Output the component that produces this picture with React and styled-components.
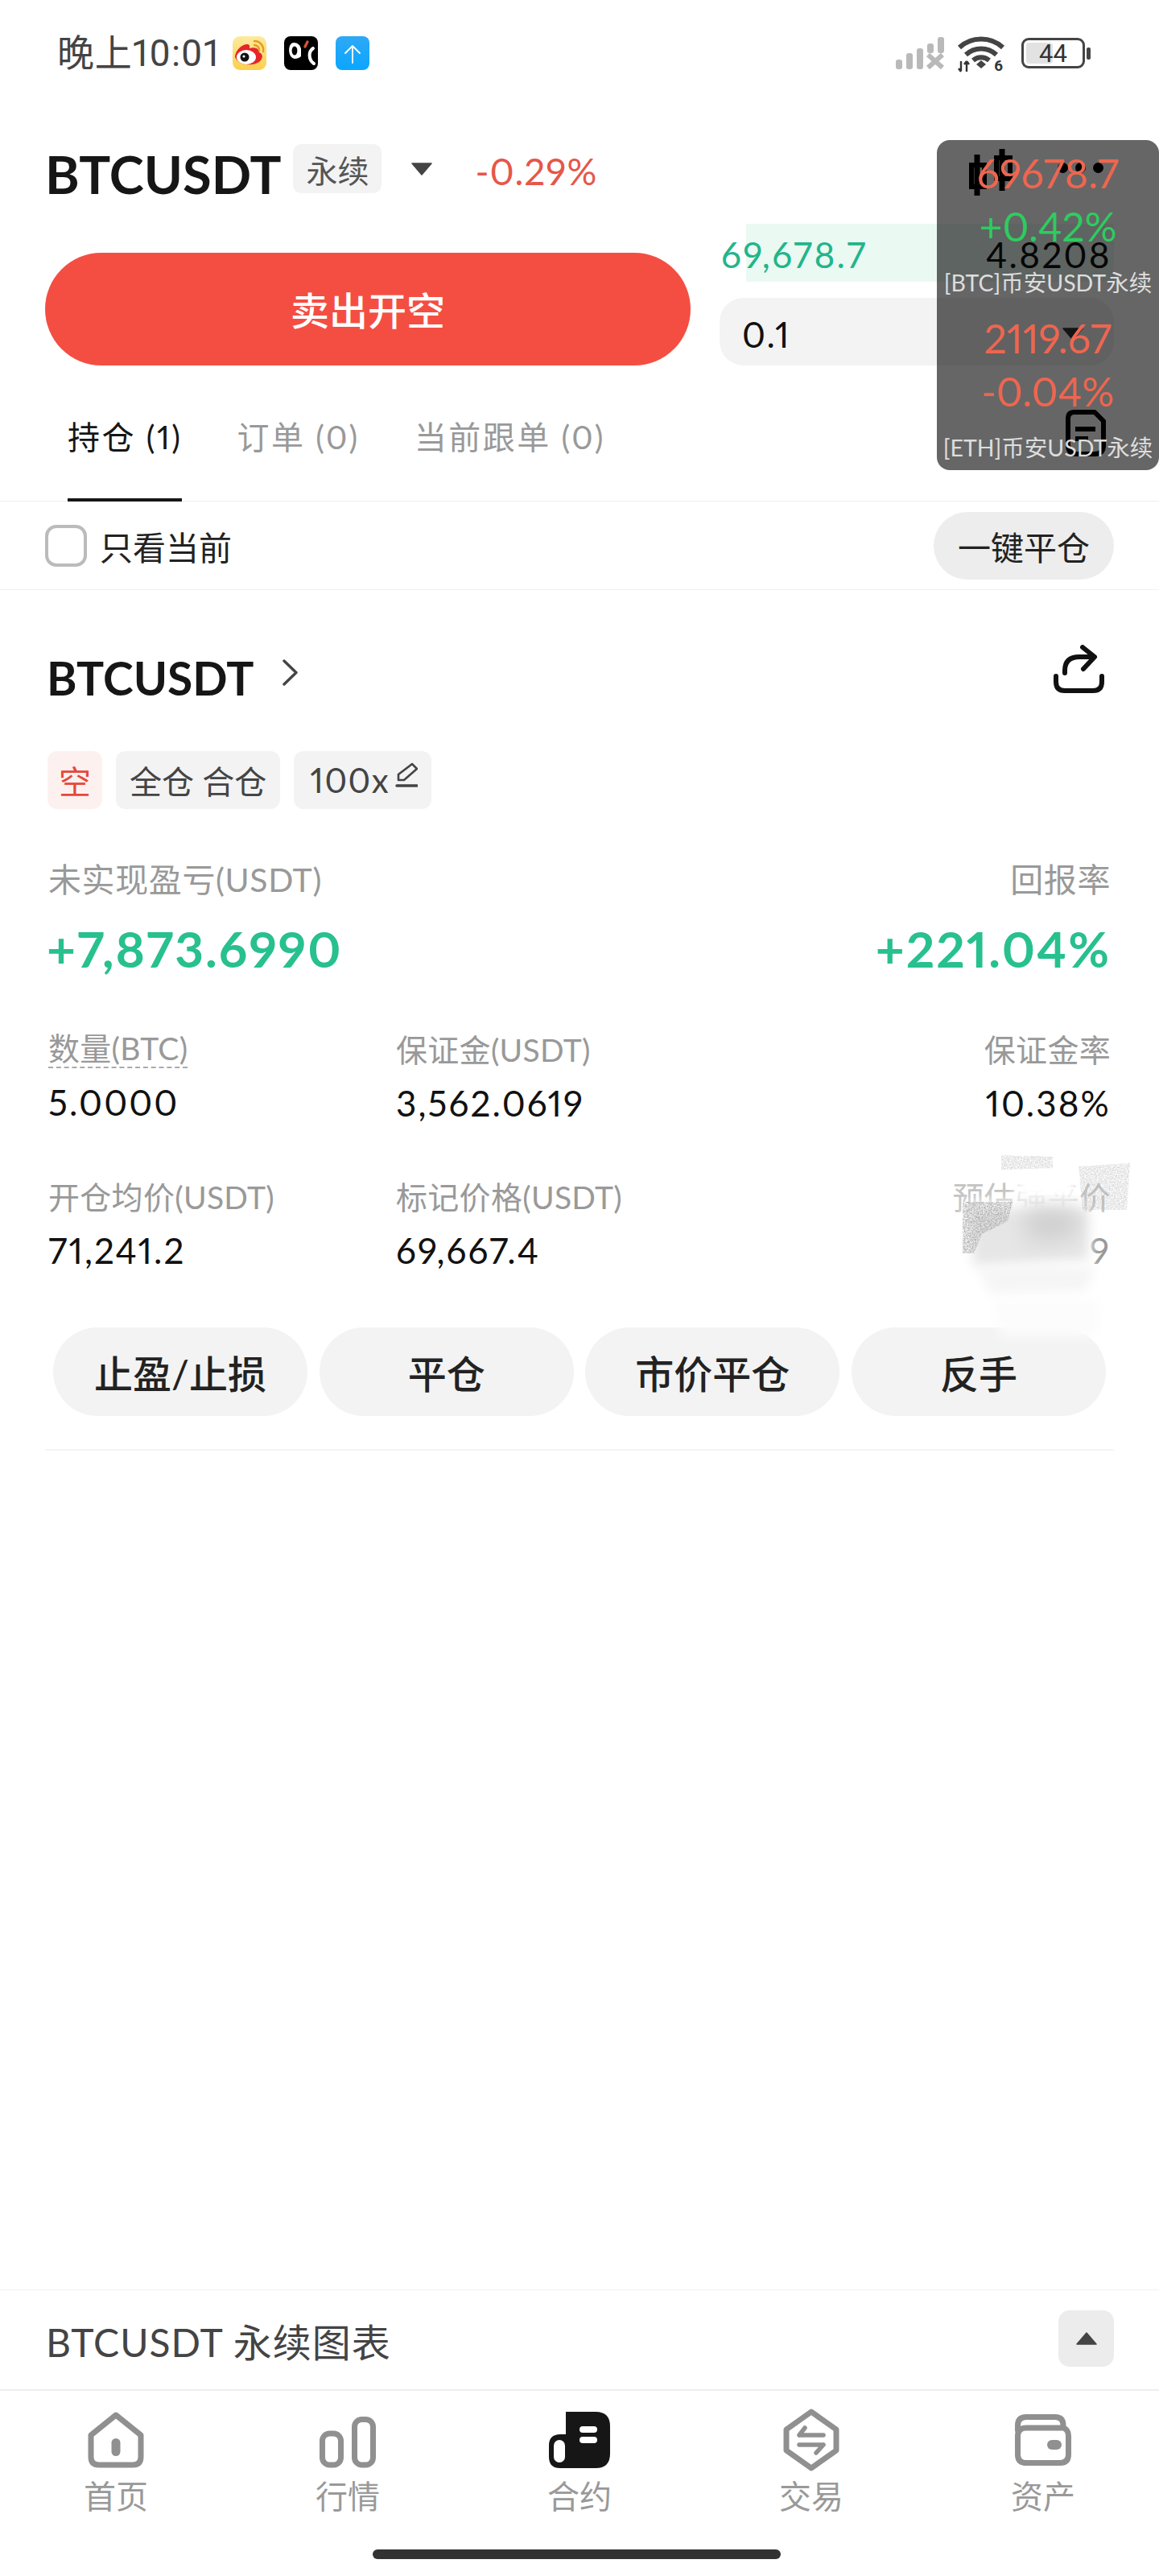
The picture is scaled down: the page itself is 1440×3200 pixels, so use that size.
import React from 'react'
import styled, { createGlobalStyle } from 'styled-components';

const GlobalStyle = createGlobalStyle`
html, body {
    margin: 0;
    padding: 0;
    background: #fff;
}
* {
    box-sizing: border-box;
}
body {
    font-family: Lato, "Noto Sans CJK SC", sans-serif;
    font-variant-numeric: proportional-nums;
    color: #111;
}
`

const Page = styled.div`
position: relative;
width: 1440px;
height: 3200px;
display: flex;
flex-direction: column;
background: #fff;
overflow: hidden;
`

const StatusBar = styled.div`
height: 132px;
padding: 0 92px 0 71px;
display: flex;
align-items: center;
justify-content: space-between;
`

const StatusLeft = styled.div`
display: flex;
align-items: center;
`

const StatusTime = styled.span`
font-family: Roboto, "Noto Sans CJK SC", sans-serif;
font-size: 46px;
line-height: 52px;
letter-spacing: 0.8px;
color: #444;
margin-right: 16px;
`

const AppIcon = styled.svg`
width: 42px;
height: 42px;
margin-right: 22px;
display: block;
`

const StatusRight = styled.div`
display: flex;
align-items: center;
gap: 16px;
`

const Battery = styled.div`
position: relative;
width: 79px;
height: 38px;
border: 3px solid #444;
border-radius: 9px;
padding: 3px;
margin-left: 4px;
font-family: Roboto, sans-serif;
font-size: 31px;
color: #333;
display: flex;
align-items: center;
justify-content: center;
&::before {
    content: "";
    position: absolute;
    left: 3px;
    top: 3px;
    bottom: 3px;
    width: 33px;
    background: #e2e2e2;
    border-radius: 4px;
}
&::after {
    content: "";
    position: absolute;
    right: -10px;
    top: 9px;
    width: 5px;
    height: 15px;
    background: #444;
    border-radius: 2px;
}
`

const BatteryNum = styled.span`
position: relative;
`

const TopRow = styled.div`
height: 146px;
padding: 47px 69px 0 56px;
display: flex;
align-items: flex-start;
justify-content: space-between;
`

const TitleGroup = styled.div`
display: flex;
align-items: center;
height: 61px;
`

const Title = styled.h1`
margin: 0;
font-size: 65px;
line-height: 76px;
font-weight: 700;
color: #161616;
position: relative;
top: 6px;
`

const KindTag = styled.span`
width: 110px;
height: 61px;
margin-left: 15px;
background: #f3f3f3;
border-radius: 10px;
display: flex;
align-items: center;
justify-content: center;
font-size: 39px;
color: #555;
`

const Caret = styled.svg`
width: 26px;
height: 16px;
display: block;
margin-left: ${p => p.$left || 0}px;
`

const Change = styled.span`
margin: 6px 0 0 53px;
font-size: 46px;
letter-spacing: 1px;
color: #e5574a;
`

const ToolIcons = styled.div`
display: flex;
align-items: center;
gap: 56px;
margin-top: 6px;
`

const Dots = styled.div`
display: flex;
gap: 9px;
margin-top: -12px;
`

const Dot = styled.span`
width: 13px;
height: 13px;
border-radius: 50%;
background: #000;
`

const Trade = styled.div`
height: 176px;
padding: 0 56px;
display: flex;
gap: 36px;
`

const SellButton = styled.div`
width: 802px;
height: 140px;
margin-top: 36px;
padding-bottom: 2px;
border-radius: 70px;
background: #f44e43;
color: #fff;
font-size: 48px;
font-weight: 500;
display: flex;
align-items: center;
justify-content: center;
`

const TradeSide = styled.div`
width: 490px;
display: flex;
flex-direction: column;
gap: 20px;
`

const DepthRow = styled.div`
position: relative;
height: 72px;
display: flex;
align-items: center;
justify-content: space-between;
padding: 4px 3px 0 2px;
font-size: 44px;
letter-spacing: 2.3px;
`

const DepthBar = styled.div`
position: absolute;
left: 33px;
right: 0;
top: 0;
bottom: 0;
background: #ebf9f3;
`

const DepthValue = styled.span`
position: relative;
color: ${p => p.$color};
`

const AmountInput = styled.div`
height: 84px;
border-radius: 30px;
background: #f3f3f3;
padding: 6px 38px 0 28px;
display: flex;
align-items: center;
justify-content: space-between;
font-size: 44px;
letter-spacing: 2px;
color: #111;
`

const Tabs = styled.div`
height: 169px;
padding: 64px 10px 0 84px;
display: flex;
align-items: flex-end;
border-bottom: 1px solid #f0f0f0;
`

const Tab = styled.div`
height: 104px;
margin-right: 68px;
padding-bottom: 52px;
margin-bottom: -1px;
font-size: 40px;
line-height: 48px;
letter-spacing: 2.5px;
white-space: nowrap;
color: ${p => (p.$active ? '#161616' : '#999')};
border-bottom: 4px solid ${p => (p.$active ? '#161616' : 'transparent')};
`

const TabDoc = styled.svg`
width: 50px;
height: 58px;
margin-left: auto;
margin-right: 56px;
margin-bottom: 55px;
display: block;
`

const FilterRow = styled.div`
height: 110px;
padding: 0 56px;
display: flex;
align-items: center;
justify-content: space-between;
border-bottom: 1px solid #f0f0f0;
`

const OnlyCurrent = styled.label`
display: flex;
align-items: center;
gap: 16px;
font-size: 41px;
color: #222;
`

const Check = styled.span`
width: 52px;
height: 52px;
border: 4px solid #bbb;
border-radius: 14px;
`

const CloseAll = styled.div`
width: 224px;
height: 84px;
border-radius: 42px;
background: #ededed;
color: #222;
font-size: 41px;
display: flex;
align-items: center;
justify-content: center;
`

const Card = styled.div`
padding: 66px 60px 0;
display: flex;
flex-direction: column;
`

const CardHead = styled.div`
height: 88px;
display: flex;
align-items: center;
`

const CardTitle = styled.span`
margin: -2px 0 0 -2px;
font-size: 57px;
font-weight: 700;
color: #161616;
`

const Chevron = styled.svg`
width: 19px;
height: 33px;
margin: -16px 0 0 36px;
display: block;
`

const ShareIcon = styled.svg`
width: 63px;
height: 60px;
margin: -24px 8px 0 auto;
display: block;
`

const TagRow = styled.div`
margin-top: 46px;
margin-left: -1px;
display: flex;
gap: 17px;
`

const Tag = styled.span`
height: 72px;
padding: 0 ${p => (p.$side ? 14 : 17)}px;
border-radius: 12px;
background: ${p => (p.$side ? '#fdf1f0' : '#f3f3f3')};
color: ${p => (p.$side ? '#e5483b' : '#444')};
font-size: 40px;
display: flex;
align-items: center;
gap: 7px;
`

const LeverNum = styled.span`
margin-left: 3px;
font-size: 42px;
letter-spacing: 1.5px;
`

const PencilIcon = styled.svg`
width: 28px;
height: 31px;
margin-top: -14px;
display: block;
`

const PnlRow = styled.div`
margin-top: 64px;
display: flex;
justify-content: space-between;
`

const PnlCol = styled.div`
display: flex;
flex-direction: column;
align-items: ${p => (p.$right ? 'flex-end' : 'flex-start')};
`

const PnlLabel = styled.span`
font-size: 41px;
line-height: 48px;
letter-spacing: 0.6px;
color: #999;
white-space: nowrap;
`

const Label = styled.span`
font-size: 39px;
line-height: 48px;
letter-spacing: 0.3px;
color: #999;
white-space: nowrap;
${p => p.$dashed && 'border-bottom: 2px dashed #aaa; line-height: 45px; height: 47px; display: inline-block;'}
`

const PnlValue = styled.span`
margin: 29px 0 0 -2px;
font-size: 62px;
line-height: 64px;
font-weight: 700;
letter-spacing: 2px;
color: #27c08e;
`

const StatGrid = styled.div`
margin-top: 70px;
display: grid;
grid-template-columns: 432px 1fr auto;
row-gap: 69px;
`

const Stat = styled.div`
display: flex;
flex-direction: column;
align-items: ${p => (p.$right ? 'flex-end' : 'flex-start')};
`

const Value = styled.span`
margin-top: 18px;
font-size: 44px;
line-height: 48px;
letter-spacing: 2.1px;
color: ${p => p.$color || '#111'};
`

const FadedLabel = styled(Label)`
color: #c4c4c4;
`

const Actions = styled.div`
margin: 72px 6px 0;
display: grid;
grid-template-columns: repeat(4, 316px);
justify-content: space-between;
`

const ActionButton = styled.div`
height: 110px;
border-radius: 55px;
background: #f3f3f3;
color: #222;
font-size: 48px;
font-weight: 500;
display: flex;
align-items: center;
justify-content: center;
`

const CardDivider = styled.div`
height: 2px;
margin: 41px -4px 0;
background: #f4f4f4;
`

const Spacer = styled.div`
flex: 1;
`

const ChartRow = styled.div`
height: 126px;
padding: 0 56px 0 57px;
display: flex;
align-items: center;
justify-content: space-between;
border-top: 1px solid #f0f0f0;
border-bottom: 2px solid #eee;
`

const ChartTitle = styled.span`
font-size: 48px;
letter-spacing: 1px;
color: #444;
`

const ChartToggle = styled.div`
width: 69px;
height: 70px;
margin-top: -4px;
border-radius: 14px;
background: #ececec;
display: flex;
align-items: center;
justify-content: center;
`

const NavBar = styled.div`
height: 230px;
display: grid;
grid-template-columns: repeat(5, 288px);
`

const NavItem = styled.div`
height: 156px;
display: flex;
flex-direction: column;
align-items: center;
justify-content: flex-end;
gap: 10px;
font-size: 40px;
line-height: 50px;
color: #999;
`

const NavIcon = styled.svg`
height: ${p => p.$h}px;
width: ${p => p.$w}px;
display: block;
margin-bottom: ${p => p.$mb || 0}px;
`

const HomeIndicator = styled.div`
position: absolute;
left: 463px;
top: 3167px;
width: 507px;
height: 12px;
border-radius: 6px;
background: #333;
`

// floating ticker window, sits over the header
const Ticker = styled.div`
position: absolute;
left: 1164px;
top: 174px;
width: 276px;
height: 410px;
border-radius: 16px;
background: rgba(0, 0, 0, 0.6);
display: flex;
flex-direction: column;
align-items: center;
`

const TickerBlock = styled.div`
height: 205px;
padding-top: 11px;
display: flex;
flex-direction: column;
align-items: center;
`

const TickerNum = styled.span`
font-size: 50px;
line-height: 60px;
height: 66px;
color: ${p => p.$color};
white-space: nowrap;
`

const TickerName = styled.span`
font-size: 28.5px;
line-height: 40px;
margin-top: 14px;
color: #ddd;
white-space: nowrap;
`

const Smudge = styled.svg`
position: absolute;
left: 1160px;
top: 1425px;
width: 250px;
height: 260px;
display: block;
`

const WeiboIcon = () => (
    <AppIcon viewBox="0 0 42 42">
        <defs>
            <linearGradient id="wb" x1="0" y1="0" x2="0" y2="1">
                <stop offset="0" stopColor="#fdeaa0" />
                <stop offset="1" stopColor="#fbd04a" />
            </linearGradient>
        </defs>
        <rect width="42" height="42" rx="9" fill="url(#wb)" />
        <path d="M3 26 C3 17 13 9 19 10 C22 11 21 14 21 15 C27 13 33 15 33 20 C38 22 38 27 34 31 C28 37 8 38 3 26 Z" fill="#e6252a" />
        <ellipse cx="17" cy="26" rx="12" ry="9" fill="#fff" />
        <circle cx="15" cy="26" r="5.5" fill="#111" />
        <circle cx="14" cy="25" r="1.6" fill="#fff" />
        <path d="M27 6 A11 11 0 0 1 38 19 M27 11 A6 6 0 0 1 33 18" fill="none" stroke="#e99a22" strokeWidth="2.4" strokeLinecap="round" />
    </AppIcon>
)

const PodIcon = () => (
    <AppIcon viewBox="0 0 42 42">
        <rect width="42" height="42" rx="8" fill="#000" />
        <path d="M12 8 C4 8 4 27 13 28 C16 28 19 27 21 25 L21 16 C20 11 17 8 12 8 Z" fill="#fff" />
        <ellipse cx="13" cy="18" rx="3.4" ry="5.5" fill="#000" />
        <path d="M36 15 C30 19 30 29 37 34" fill="none" stroke="#fff" strokeWidth="4" strokeLinecap="round" />
        <path d="M29 7 L26 13" stroke="#d5532f" strokeWidth="3.4" strokeLinecap="round" />
    </AppIcon>
)

const UploadIcon = () => (
    <AppIcon viewBox="0 0 42 42">
        <defs>
            <linearGradient id="up" x1="0" y1="0" x2="0" y2="1">
                <stop offset="0" stopColor="#2fa8f5" />
                <stop offset="1" stopColor="#0aa6ff" />
            </linearGradient>
        </defs>
        <rect width="42" height="42" rx="8" fill="url(#up)" />
        <path d="M21 33 V12 M12 21 L21 12 L30 21" fill="none" stroke="#fff" strokeWidth="1.8" strokeLinecap="round" strokeLinejoin="round" />
    </AppIcon>
)

const SignalIcon = () => (
    <svg width="60" height="40" viewBox="0 0 60 40">
        <g fill="#b9b9b9">
            <rect x="0" y="28" width="8" height="12" rx="3" />
            <rect x="13" y="20" width="8" height="20" rx="3" />
            <rect x="26" y="14" width="8" height="26" rx="3" />
            <rect x="39" y="8" width="8" height="12" rx="3" />
            <rect x="52" y="0" width="8" height="20" rx="3" />
        </g>
        <path d="M40 22 L58 38 M58 22 L40 38" stroke="#b9b9b9" strokeWidth="6" />
    </svg>
)

const WifiIcon = () => (
    <svg width="60" height="52" viewBox="0 -4 60 52">
        <g fill="none" stroke="#444" strokeWidth="6">
            <path d="M3 15 C18 1 42 1 57 15" />
            <path d="M11 24 C22 14 38 14 49 24" />
            <path d="M20 31 C26 26 34 26 40 31" />
        </g>
        <path d="M24 36 L30 31 L36 36 L30 41 Z" fill="#444" />
        <path d="M5 32 V44 M2 41 L5 45 M12 45 V33 M9 36 L12 32 M15 36 L12 32" fill="none" stroke="#333" strokeWidth="2.4" />
        <text x="46" y="44" fontFamily="Roboto" fontWeight="700" fontSize="19" fill="#333">6</text>
    </svg>
)

const KlineIcon = () => (
    <svg width="54" height="58" viewBox="0 0 54 58" style={{ display: 'block' }}>
        <g fill="none" stroke="#000" strokeWidth="6">
            <path d="M10 7 V58 M41 0 V52" strokeWidth="7" />
            <rect x="3" y="20" width="16" height="27" />
            <rect x="34" y="11" width="17" height="26" />
        </g>
    </svg>
)

const Triangle = ({ left, color = '#444', up }) => (
    <Caret $left={left} viewBox="0 0 26 16">
        <path d={up ? 'M13 1 L25 15 H1 Z' : 'M1 1 H25 L13 15 Z'} fill={color} stroke={color} strokeWidth="1.5" strokeLinejoin="round" />
    </Caret>
)

const navStroke = { fill: 'none', stroke: '#909090', strokeWidth: 7, strokeLinejoin: 'round', strokeLinecap: 'round' }

const HomeNav = () => (
    <NavIcon $w={70} $h={70} viewBox="0 0 70 70">
        <path d="M35 4 L66 29 V56 Q66 66 56 66 H14 Q4 66 4 56 V29 Z" {...navStroke} />
        <rect x="29.5" y="33" width="11" height="22" rx="5.5" fill="#909090" />
    </NavIcon>
)

const MarketNav = () => (
    <NavIcon $w={70} $h={64} viewBox="0 0 70 64">
        <rect x="3.5" y="21" width="23" height="39" rx="9" {...navStroke} />
        <rect x="43.5" y="3.5" width="23" height="56.5" rx="9" {...navStroke} />
    </NavIcon>
)

const ContractNav = () => (
    <NavIcon $w={76} $h={70} viewBox="0 0 76 70">
        <path d="M21 0 H58 Q76 0 76 18 V52 Q76 70 58 70 H14 Q0 70 0 56 V42 Q0 28 14 28 H21 Z" fill="#161616" />
        <rect x="6" y="35" width="14" height="28" rx="7" fill="#fff" />
        <rect x="38" y="18" width="22" height="8" rx="4" fill="#fff" />
        <rect x="38" y="31" width="22" height="8" rx="4" fill="#fff" />
    </NavIcon>
)

const TradeNav = () => (
    <NavIcon $w={70} $h={78} $mb={-4} viewBox="0 0 70 78">
        <path d="M35 4 L66 26 V52 L35 74 L4 52 V26 Z" {...navStroke} />
        <path d="M20 33 H50 M20 33 L27 24 M20 45 H50 M50 45 L41 55" {...navStroke} strokeWidth="5.5" />
    </NavIcon>
)

const WalletNav = () => (
    <NavIcon $w={70} $h={64} $mb={3} viewBox="0 0 70 64">
        <path d="M3.5 20 V14 Q3.5 3.5 14 3.5 H50 Q60 3.5 60 14 V17 H14 Q3.5 17 3.5 27 V50 Q3.5 60.5 14 60.5 H56 Q66.5 60.5 66.5 50 V27 Q66.5 19 60 17" {...navStroke} />
        <rect x="40" y="32" width="18" height="12" rx="6" fill="#909090" />
    </NavIcon>
)

const NAV_ITEMS = [
    { label: '首页', icon: <HomeNav /> },
    { label: '行情', icon: <MarketNav /> },
    { label: '合约', icon: <ContractNav /> },
    { label: '交易', icon: <TradeNav /> },
    { label: '资产', icon: <WalletNav /> },
];

const ACTIONS = ['止盈/止损', '平仓', '市价平仓', '反手'];

const App = () => {
    return (
        <Page>
            <GlobalStyle />
            <StatusBar>
                <StatusLeft>
                    <StatusTime>晚上10:01</StatusTime>
                    <WeiboIcon />
                    <PodIcon />
                    <UploadIcon />
                </StatusLeft>
                <StatusRight>
                    <SignalIcon />
                    <WifiIcon />
                    <Battery><BatteryNum>44</BatteryNum></Battery>
                </StatusRight>
            </StatusBar>

            <TopRow>
                <TitleGroup>
                    <Title>BTCUSDT</Title>
                    <KindTag>永续</KindTag>
                    <Triangle left={37} />
                    <Change>-0.29%</Change>
                </TitleGroup>
                <ToolIcons>
                    <KlineIcon />
                    <Dots><Dot /><Dot /><Dot /></Dots>
                </ToolIcons>
            </TopRow>

            <Trade>
                <SellButton>卖出开空</SellButton>
                <TradeSide>
                    <DepthRow>
                        <DepthBar />
                        <DepthValue $color="#22b58a">69,678.7</DepthValue>
                        <DepthValue $color="#111">4.8208</DepthValue>
                    </DepthRow>
                    <AmountInput>
                        0.1
                        <Triangle color="#333" />
                    </AmountInput>
                </TradeSide>
            </Trade>

            <Tabs>
                <Tab $active>持仓 (1)</Tab>
                <Tab>订单 (0)</Tab>
                <Tab>当前跟单 (0)</Tab>
                <TabDoc viewBox="0 0 50 58">
                    <path d="M11 3 H36 L47 14 V44 Q47 55 36 55 H14 Q3 55 3 44 V11 Q3 3 11 3 Z" fill="none" stroke="#000" strokeWidth="6" strokeLinejoin="round" />
                    <path d="M12 24 H37 M12 36 H28" stroke="#000" strokeWidth="6" />
                </TabDoc>
            </Tabs>

            <FilterRow>
                <OnlyCurrent><Check />只看当前</OnlyCurrent>
                <CloseAll>一键平仓</CloseAll>
            </FilterRow>

            <Card>
                <CardHead>
                    <CardTitle>BTCUSDT</CardTitle>
                    <Chevron viewBox="0 0 19 33">
                        <path d="M2 2 L17 16.5 L2 31" fill="none" stroke="#444" strokeWidth="3.4" strokeLinecap="round" strokeLinejoin="round" />
                    </Chevron>
                    <ShareIcon viewBox="0 0 63 60">
                        <g fill="none" stroke="#111" strokeWidth="6" strokeLinecap="round" strokeLinejoin="round">
                            <path d="M3 39 V46 Q3 57 14 57 H49 Q60 57 60 46 V39" />
                            <path d="M14 35 V32 Q14 15 32 15 H50" />
                            <path d="M36 3 L51 15 L37 30" />
                        </g>
                    </ShareIcon>
                </CardHead>

                <TagRow>
                    <Tag $side>空</Tag>
                    <Tag>全仓 合仓</Tag>
                    <Tag>
                        <LeverNum>100x</LeverNum>
                        <PencilIcon viewBox="0 0 28 31">
                            <path d="M21 2 L27 8 L11 22 H4 V15 Z" fill="none" stroke="#444" strokeWidth="2.6" strokeLinejoin="round" />
                            <path d="M2 29 H27" stroke="#444" strokeWidth="3.4" strokeLinecap="round" />
                        </PencilIcon>
                    </Tag>
                </TagRow>

                <PnlRow>
                    <PnlCol>
                        <PnlLabel>未实现盈亏(USDT)</PnlLabel>
                        <PnlValue>+7,873.6990</PnlValue>
                    </PnlCol>
                    <PnlCol $right>
                        <PnlLabel>回报率</PnlLabel>
                        <PnlValue>+221.04%</PnlValue>
                    </PnlCol>
                </PnlRow>

                <StatGrid>
                    <Stat>
                        <Label $dashed>数量(BTC)</Label>
                        <Value>5.0000</Value>
                    </Stat>
                    <Stat>
                        <Label>保证金(USDT)</Label>
                        <Value>3,562.0619</Value>
                    </Stat>
                    <Stat $right>
                        <Label>保证金率</Label>
                        <Value>10.38%</Value>
                    </Stat>
                    <Stat>
                        <Label>开仓均价(USDT)</Label>
                        <Value>71,241.2</Value>
                    </Stat>
                    <Stat>
                        <Label>标记价格(USDT)</Label>
                        <Value>69,667.4</Value>
                    </Stat>
                    <Stat $right>
                        <FadedLabel>预估强平价</FadedLabel>
                        <Value $color="#999">9</Value>
                    </Stat>
                </StatGrid>

                <Actions>
                    {ACTIONS.map(action => (
                        <ActionButton key={action}>{action}</ActionButton>
                    ))}
                </Actions>

                <CardDivider />
            </Card>

            <Spacer />

            <ChartRow>
                <ChartTitle>BTCUSDT 永续图表</ChartTitle>
                <ChartToggle>
                    <Triangle up />
                </ChartToggle>
            </ChartRow>

            <NavBar>
                {NAV_ITEMS.map(item => (
                    <NavItem key={item.label}>
                        {item.icon}
                        {item.label}
                    </NavItem>
                ))}
            </NavBar>

            <HomeIndicator />

            <Ticker>
                <TickerBlock>
                    <TickerNum $color="#ee6650">69678.7</TickerNum>
                    <TickerNum $color="#2ecc5f">+0.42%</TickerNum>
                    <TickerName>[BTC]币安USDT永续</TickerName>
                </TickerBlock>
                <TickerBlock>
                    <TickerNum $color="#ee6650">2119.67</TickerNum>
                    <TickerNum $color="#ee6650">-0.04%</TickerNum>
                    <TickerName>[ETH]币安USDT永续</TickerName>
                </TickerBlock>
            </Ticker>

            <Smudge viewBox="0 0 250 260">
                <defs>
                    <filter id="soft" x="-30%" y="-30%" width="160%" height="160%">
                        <feGaussianBlur stdDeviation="7" />
                    </filter>
                    <filter id="softer" x="-40%" y="-40%" width="180%" height="180%">
                        <feGaussianBlur stdDeviation="14" />
                    </filter>
                    <filter id="grain" x="0" y="0" width="100%" height="100%">
                        <feTurbulence type="fractalNoise" baseFrequency="0.6" numOctaves="2" seed="4" />
                        <feColorMatrix values="0 0 0 0 0.42  0 0 0 0 0.42  0 0 0 0 0.42  2 0 0 0 -0.55" />
                        <feComposite in2="SourceGraphic" operator="in" />
                    </filter>
                </defs>
                <path d="M105 25 H178 V66 H100 Z" fill="#fff" filter="url(#soft)" />
                <path d="M40 68 H190 L195 148 L50 155 Z" fill="#fff" filter="url(#soft)" />
                <path d="M45 78 H190 L192 140 L50 148 Z" fill="#e6e6e6" filter="url(#soft)" />
                <path d="M112 76 H182 L176 112 L118 118 Z" fill="#cfcfcf" filter="url(#softer)" />
                <path d="M55 148 H200 L190 178 L70 182 Z" fill="#f5f5f5" filter="url(#soft)" />
                <path d="M70 190 H205 V235 H85 Z" fill="#fcfcfc" filter="url(#soft)" />
                <g filter="url(#grain)">
                    <path d="M36 68 H98 L92 92 L60 108 L50 132 H36 Z" fill="#000" />
                    <path d="M84 10 L148 12 V26 L84 28 Z" fill="#000" opacity="0.5" />
                    <path d="M180 24 L244 20 L240 78 L185 78 Z" fill="#000" opacity="0.5" />
                </g>
            </Smudge>
        </Page>
    )
}

export default App
